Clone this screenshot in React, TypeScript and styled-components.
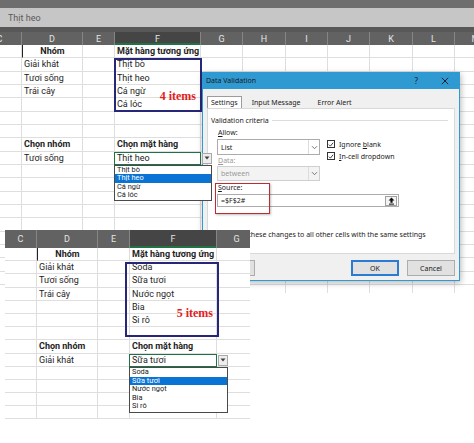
import React from 'react';
import styled, { createGlobalStyle } from 'styled-components';

const CELL_FONT = `Roboto, "Liberation Sans", Arial, sans-serif`;
const UI_FONT = `"Noto Sans", "Open Sans", "Liberation Sans", sans-serif`;

const GlobalStyle = createGlobalStyle`
  html, body {
    margin: 0;
    padding: 0;
    background: #fff;
  }
  body {
    width: 474px;
    height: 443px;
    overflow: hidden;
  }
`;

type Col = { key: string; w: number };
type CellData = { text: string; bold?: boolean; center?: boolean; edge?: boolean };
type RowData = Record<string, CellData>;

const Canvas = styled.div`
  position: relative;
  width: 474px;
  height: 443px;
  overflow: hidden;
  background: #fff;
`;

// windows pasted on the picture: placed where they sit on the canvas
const Window = styled.div<{ $x: number; $y: number; $w: number; $h: number; $z?: number }>`
  position: absolute;
  left: ${(p) => p.$x}px;
  top: ${(p) => p.$y}px;
  width: ${(p) => p.$w}px;
  height: ${(p) => p.$h}px;
  ${(p) => (p.$z !== undefined ? `z-index: ${p.$z};` : '')}
`;

/* ---------- spreadsheet ---------- */

const SheetFrame = styled.div`
  display: flex;
  flex-direction: column;
  width: 100%;
  height: 100%;
  overflow: hidden;
  background: #fff;
  font-family: ${CELL_FONT};
`;

const FormulaBar = styled.div`
  height: 19px;
  flex-shrink: 0;
  display: flex;
  align-items: center;
  padding-left: 8px;
  background: #c6c6c6;
  border-top: 8px solid #6e6e6e;
  border-bottom: 5px solid #585858;
  font-size: 9px;
  color: #5a5a5a;
`;

const Track = styled.div<{ $lead: number }>`
  display: flex;
  flex-direction: column;
  margin-left: ${(p) => -p.$lead}px;
`;

const HeaderRow = styled.div<{ $h: number }>`
  display: flex;
  height: ${(p) => p.$h}px;
  flex-shrink: 0;
  background: #626262;
`;

const HeadCell = styled.div<{ $w: number; $active?: boolean }>`
  width: ${(p) => p.$w}px;
  flex-shrink: 0;
  box-sizing: border-box;
  display: flex;
  align-items: center;
  justify-content: center;
  font-size: 9px;
  color: #e4e4e4;
  border-right: 1px solid #858585;
  ${(p) => (p.$active ? 'background: #454545; box-shadow: inset 0 -2px 0 #217346;' : '')}
`;

const SheetBody = styled.div`
  position: relative;
  flex: 1;
`;

const GridRow = styled.div<{ $h: number }>`
  display: flex;
  height: ${(p) => p.$h}px;
  flex-shrink: 0;
`;

const Cell = styled.div<{ $w: number; $bold?: boolean; $center?: boolean; $edge?: boolean }>`
  width: ${(p) => p.$w}px;
  flex-shrink: 0;
  box-sizing: border-box;
  padding: 0 2px;
  border-right: 1px solid #dedede;
  border-bottom: 1px solid #dedede;
  ${(p) => (p.$edge ? 'border-left: 1px solid #222;' : '')}
  font-size: 9px;
  line-height: 12.5px;
  color: #1e1e1e;
  white-space: nowrap;
  font-weight: ${(p) => (p.$bold ? 700 : 400)};
  text-align: ${(p) => (p.$center ? 'center' : 'left')};
`;

const ItemBox = styled.div<{ $x: number; $y: number; $w: number; $h: number }>`
  position: absolute;
  left: ${(p) => p.$x}px;
  top: ${(p) => p.$y}px;
  width: ${(p) => p.$w}px;
  height: ${(p) => p.$h}px;
  box-sizing: border-box;
  border: 2px solid #27277a;
  display: flex;
  align-items: flex-end;
  justify-content: flex-end;
  padding: 0 4px ${(p) => (p.$h > 60 ? 14 : 6)}px 0;
`;

const Badge = styled.span`
  font-family: "Liberation Serif", "DejaVu Serif", serif;
  font-weight: 700;
  font-size: 12px;
  color: #e2211c;
`;

const DropAnchor = styled.div<{ $x: number; $y: number }>`
  position: absolute;
  left: ${(p) => p.$x}px;
  top: ${(p) => p.$y}px;
  z-index: 2;
`;

const ActiveCell = styled.div<{ $w: number }>`
  width: ${(p) => p.$w}px;
  height: 13.5px;
  box-sizing: border-box;
  border: 1.5px solid #1f7246;
  background: #fff;
  padding-left: 2px;
  font-size: 9px;
  line-height: 10.5px;
  color: #1e1e1e;
`;

const ArrowButton = styled.div`
  position: absolute;
  top: 1px;
  right: -11px;
  width: 10px;
  height: 11px;
  box-sizing: border-box;
  border: 1px solid #a9a9a9;
  background: #eeeeee;
  display: flex;
  align-items: center;
  justify-content: center;
`;

const DropList = styled.div<{ $w: number }>`
  position: absolute;
  top: 13.5px;
  left: 0;
  width: ${(p) => p.$w}px;
  box-sizing: border-box;
  border: 1px solid #4a4a4a;
  background: #fff;
  padding: 0 0 1px;
`;

const DropItem = styled.div<{ $selected?: boolean; $h: number }>`
  height: ${(p) => p.$h}px;
  line-height: ${(p) => p.$h}px;
  padding-left: 2px;
  font-size: 7.4px;
  color: ${(p) => (p.$selected ? '#fff' : '#1a1a1a')};
  background: ${(p) => (p.$selected ? '#0a74d4' : 'transparent')};
`;

type SheetProps = {
  cols: Col[];
  lead?: number;
  activeCol: string;
  headH: number;
  rowH: number;
  rowCount: number;
  data: Record<number, RowData>;
  formula?: string;
  children?: React.ReactNode;
};

const Sheet = ({ cols, lead = 0, activeCol, headH, rowH, rowCount, data, formula, children }: SheetProps) => (
  <SheetFrame>
    {formula !== undefined && <FormulaBar>{formula}</FormulaBar>}
    <Track $lead={lead}>
      <HeaderRow $h={headH}>
        {cols.map((c) => (
          <HeadCell key={c.key} $w={c.w} $active={c.key === activeCol}>
            {c.key}
          </HeadCell>
        ))}
      </HeaderRow>
    </Track>
    <SheetBody>
      <Track $lead={lead}>
        {Array.from({ length: rowCount }).map((_, r) => (
          <GridRow key={r} $h={rowH}>
            {cols.map((c) => {
              const cell = data[r]?.[c.key];
              return (
                <Cell key={c.key} $w={c.w} $bold={cell?.bold} $center={cell?.center} $edge={cell?.edge}>
                  {cell?.text}
                </Cell>
              );
            })}
          </GridRow>
        ))}
      </Track>
      {children}
    </SheetBody>
  </SheetFrame>
);

type DropdownProps = { x: number; y: number; w: number; listW: number; itemH: number; value: string; items: string[] };

const CellDropdown = ({ x, y, w, listW, itemH, value, items }: DropdownProps) => (
  <DropAnchor $x={x} $y={y}>
    <ActiveCell $w={w}>{value}</ActiveCell>
    <ArrowButton>
      <svg width="6" height="4" viewBox="0 0 6 4">
        <polygon points="0.5,0.5 5.5,0.5 3,3.5" fill="#404040" />
      </svg>
    </ArrowButton>
    <DropList $w={listW}>
      {items.map((it) => (
        <DropItem key={it} $h={itemH} $selected={it === value}>
          {it}
        </DropItem>
      ))}
    </DropList>
  </DropAnchor>
);

/* ---------- dialog ---------- */

const DialogFrame = styled.div`
  width: 100%;
  height: 100%;
  box-sizing: border-box;
  display: flex;
  flex-direction: column;
  background: #f0f0f0;
  border: 1px solid #2f99d1;
  border-top: none;
  box-shadow: 1px 2px 6px rgba(0, 0, 0, 0.28);
  font-family: ${UI_FONT};
  color: #1a1a1a;
`;

const TitleBar = styled.div`
  height: 17px;
  flex-shrink: 0;
  display: flex;
  align-items: center;
  padding: 0 10px 0 3px;
  background: #2f99d1;
  font-size: 7px;
`;

const TitleText = styled.span`
  flex: 1;
`;

const TitleActions = styled.div`
  display: flex;
  align-items: center;
  gap: 23px;
  font-size: 8px;
`;

const DialogBody = styled.div`
  flex: 1;
  display: flex;
  flex-direction: column;
  padding: 7px 4px 0 4px;
`;

const TabStrip = styled.div`
  display: flex;
  height: 12px;
  gap: 5px;
`;

const Tab = styled.div<{ $active?: boolean }>`
  display: flex;
  align-items: center;
  padding: 0 3px;
  font-size: 7px;
  box-sizing: border-box;
  border: 1px solid ${(p) => (p.$active ? '#9c9c9c' : 'transparent')};
  border-bottom: none;
  background: ${(p) => (p.$active ? '#fff' : 'transparent')};
  margin-right: ${(p) => (p.$active ? 1 : 4)}px;
`;

const TabPanel = styled.div`
  position: relative;
  height: 146px;
  box-sizing: border-box;
  background: #fff;
  border: 1px solid #d9d9d9;
  display: flex;
  flex-direction: column;
  padding: 5px 6px 0 3px;
  font-size: 7px;
`;

const Legend = styled.div`
  display: flex;
  align-items: center;
  gap: 3px;
  height: 12px;
  &::after {
    content: '';
    flex: 1;
    border-top: 1px solid #dcdcdc;
  }
`;

const CriteriaRow = styled.div`
  display: flex;
  gap: 7px;
  padding-left: 6px;
`;

const FieldCol = styled.div`
  display: flex;
  flex-direction: column;
  width: 103px;
`;

const FieldLabel = styled.div<{ $muted?: boolean; $h: number }>`
  height: ${(p) => p.$h}px;
  display: flex;
  align-items: center;
  padding-left: 1px;
  color: ${(p) => (p.$muted ? '#9a9a9a' : '#1a1a1a')};
`;

const Combo = styled.div<{ $disabled?: boolean; $h: number }>`
  height: ${(p) => p.$h}px;
  box-sizing: border-box;
  display: flex;
  align-items: center;
  border: 1px solid ${(p) => (p.$disabled ? '#cfcfcf' : '#acacac')};
  background: ${(p) => (p.$disabled ? '#f3f3f3' : '#fff')};
  color: ${(p) => (p.$disabled ? '#9a9a9a' : '#1a1a1a')};
  padding-left: 3px;
`;

const ComboText = styled.span`
  flex: 1;
`;

const ComboChevron = styled.div`
  width: 10px;
  height: 100%;
  display: flex;
  align-items: center;
  justify-content: center;
  border-left: 1px solid #dcdcdc;
`;

const CheckCol = styled.div`
  display: flex;
  flex-direction: column;
  gap: 4px;
  padding-top: 14px;
`;

const CheckRow = styled.label`
  display: flex;
  align-items: center;
  gap: 4px;
  height: 8px;
`;

const CheckBox = styled.span`
  width: 8px;
  height: 8px;
  box-sizing: border-box;
  border: 1px solid #333;
  background: #fff;
  display: flex;
  align-items: center;
  justify-content: center;
`;

const SourceBlock = styled.div`
  display: flex;
  flex-direction: column;
  padding-left: 6px;
`;

const SourceInput = styled.div`
  width: 182px;
  height: 13px;
  box-sizing: border-box;
  display: flex;
  align-items: center;
  justify-content: space-between;
  border: 1px solid #acacac;
  background: #fff;
  padding: 0 1px 0 3px;
`;

const PickButton = styled.div`
  width: 12px;
  height: 10px;
  box-sizing: border-box;
  border: 1px solid #a0a0a0;
  background: #f4f4f4;
  display: flex;
  align-items: center;
  justify-content: center;
`;

const ApplyRow = styled.div`
  display: flex;
  align-items: center;
  gap: 5px;
  margin-top: auto;
  margin-bottom: 14px;
  padding-left: 4px;
`;

const Callout = styled.div`
  position: absolute;
  left: 7px;
  top: 74px;
  width: 55px;
  height: 31px;
  box-sizing: border-box;
  border: 1.5px solid #c12a30;
  box-shadow: 1px 1px 2px rgba(0, 0, 0, 0.25);
`;

const ButtonRow = styled.div`
  display: flex;
  gap: 8px;
  margin-top: 6px;
`;

const Spacer = styled.div`
  flex: 1;
`;

const DialogButton = styled.div<{ $primary?: boolean }>`
  width: 48px;
  height: 16px;
  box-sizing: border-box;
  display: flex;
  align-items: center;
  justify-content: center;
  font-size: 7px;
  background: #e1e1e1;
  border: 1px solid ${(p) => (p.$primary ? '#2a7bd1' : '#adadad')};
  ${(p) => (p.$primary ? 'box-shadow: inset 0 0 0 1px #2a7bd1;' : '')}
`;

const Check = () => (
  <svg width="7" height="7" viewBox="0 0 7 7">
    <path d="M1 3.6 L2.8 5.4 L6 1.4" fill="none" stroke="#222" strokeWidth="1" />
  </svg>
);

const Chevron = () => (
  <svg width="7" height="5" viewBox="0 0 7 5">
    <path d="M1 1.2 L3.5 3.7 L6 1.2" fill="none" stroke="#666" strokeWidth="0.9" />
  </svg>
);

/* ---------- data ---------- */

const topCols: Col[] = [
  { key: 'C', w: 44 },
  { key: 'D', w: 61 },
  { key: 'E', w: 32 },
  { key: 'F', w: 86 },
  { key: 'G', w: 42 },
  { key: 'H', w: 43 },
  { key: 'I', w: 42 },
  { key: 'J', w: 42 },
  { key: 'K', w: 43 },
  { key: 'L', w: 42 },
  { key: 'M', w: 42 },
];

const bottomCols: Col[] = [
  { key: 'C', w: 32 },
  { key: 'D', w: 61 },
  { key: 'E', w: 32 },
  { key: 'F', w: 87 },
  { key: 'G', w: 40 },
];

const topData: Record<number, RowData> = {
  0: { D: { text: 'Nhóm', bold: true, center: true, edge: true }, F: { text: 'Mặt hàng tương ứng', bold: true } },
  1: { D: { text: 'Giải khát' }, F: { text: 'Thịt bò' } },
  2: { D: { text: 'Tươi sống' }, F: { text: 'Thịt heo' } },
  3: { D: { text: 'Trái cây' }, F: { text: 'Cá ngừ' } },
  4: { F: { text: 'Cá lóc' } },
  7: { D: { text: 'Chọn nhóm', bold: true }, F: { text: 'Chọn mặt hàng', bold: true } },
  8: { D: { text: 'Tươi sống' } },
};

const bottomData: Record<number, RowData> = {
  0: { D: { text: 'Nhóm', bold: true, center: true, edge: true }, F: { text: 'Mặt hàng tương ứng', bold: true } },
  1: { D: { text: 'Giải khát' }, F: { text: 'Soda' } },
  2: { D: { text: 'Tươi sống' }, F: { text: 'Sữa tươi' } },
  3: { D: { text: 'Trái cây' }, F: { text: 'Nước ngọt' } },
  4: { F: { text: 'Bia' } },
  5: { F: { text: 'Si rô' } },
  7: { D: { text: 'Chọn nhóm', bold: true }, F: { text: 'Chọn mặt hàng', bold: true } },
  8: { D: { text: 'Giải khát' } },
};

const TOP_ROW = 13.33;
const BOTTOM_ROW = 13.2;

const App = () => (
  <>
    <GlobalStyle />
    <Canvas>
      <Window $x={0} $y={0} $w={474} $h={293}>
        <Sheet
          cols={topCols}
          lead={22}
          activeCol="F"
          headH={13}
          rowH={TOP_ROW}
          rowCount={19}
          data={topData}
          formula="Thịt heo"
        >
          <ItemBox $x={114} $y={TOP_ROW} $w={88} $h={54}>
            <Badge>4 items</Badge>
          </ItemBox>
          <CellDropdown
            x={114}
            y={TOP_ROW * 8}
            w={87}
            listW={98}
            itemH={8.2}
            value="Thịt heo"
            items={['Thịt bò', 'Thịt heo', 'Cá ngừ', 'Cá lóc']}
          />
        </Sheet>
      </Window>

      <Window $x={202} $y={72} $w={258} $h={209} $z={1}>
        <DialogFrame>
          <TitleBar>
            <TitleText>Data Validation</TitleText>
            <TitleActions>
              <span>?</span>
              <svg width="8" height="8" viewBox="0 0 8 8">
                <path d="M0.8 0.8 L7.2 7.2 M7.2 0.8 L0.8 7.2" stroke="#1a1a1a" strokeWidth="0.9" />
              </svg>
            </TitleActions>
          </TitleBar>
          <DialogBody>
            <TabStrip>
              <Tab $active>Settings</Tab>
              <Tab>Input Message</Tab>
              <Tab>Error Alert</Tab>
            </TabStrip>
            <TabPanel>
              <Legend>Validation criteria</Legend>
              <CriteriaRow>
                <FieldCol>
                  <FieldLabel $h={13}>
                    <span>
                      <u>A</u>llow:
                    </span>
                  </FieldLabel>
                  <Combo $h={16}>
                    <ComboText>List</ComboText>
                    <ComboChevron>
                      <Chevron />
                    </ComboChevron>
                  </Combo>
                  <FieldLabel $h={11} $muted>
                    <span>
                      <u>D</u>ata:
                    </span>
                  </FieldLabel>
                  <Combo $h={15} $disabled>
                    <ComboText>between</ComboText>
                    <ComboChevron>
                      <Chevron />
                    </ComboChevron>
                  </Combo>
                </FieldCol>
                <CheckCol>
                  <CheckRow>
                    <CheckBox>
                      <Check />
                    </CheckBox>
                    <span>
                      Ignore <u>b</u>lank
                    </span>
                  </CheckRow>
                  <CheckRow>
                    <CheckBox>
                      <Check />
                    </CheckBox>
                    <span>
                      <u>I</u>n-cell dropdown
                    </span>
                  </CheckRow>
                </CheckCol>
              </CriteriaRow>
              <SourceBlock>
                <FieldLabel $h={13}>
                  <span>
                    <u>S</u>ource:
                  </span>
                </FieldLabel>
                <SourceInput>
                  <span>=$F$2#</span>
                  <PickButton>
                    <svg width="7" height="8" viewBox="0 0 7 8">
                      <polygon points="3.5,0.5 6.5,3.6 4.6,3.6 4.6,5.8 2.4,5.8 2.4,3.6 0.5,3.6" fill="#111" />
                      <rect x="1" y="6.6" width="5" height="1" fill="#111" />
                    </svg>
                  </PickButton>
                </SourceInput>
              </SourceBlock>
              <ApplyRow>
                <CheckBox />
                <span>Apply these changes to all other cells with the same settings</span>
              </ApplyRow>
              <Callout />
            </TabPanel>
            <ButtonRow>
              <DialogButton>Clear All</DialogButton>
              <Spacer />
              <DialogButton $primary>OK</DialogButton>
              <DialogButton>Cancel</DialogButton>
            </ButtonRow>
          </DialogBody>
        </DialogFrame>
      </Window>

      <Window $x={5} $y={230} $w={245} $h={190} $z={3}>
        <Sheet cols={bottomCols} activeCol="F" headH={18} rowH={BOTTOM_ROW} rowCount={13} data={bottomData}>
          <ItemBox $x={120} $y={14} $w={94} $h={75}>
            <Badge>5 items</Badge>
          </ItemBox>
          <CellDropdown
            x={124}
            y={BOTTOM_ROW * 8}
            w={88}
            listW={99}
            itemH={8.6}
            value="Sữa tươi"
            items={['Soda', 'Sữa tươi', 'Nước ngọt', 'Bia', 'Si rô']}
          />
        </Sheet>
      </Window>
    </Canvas>
  </>
);

export default App;
